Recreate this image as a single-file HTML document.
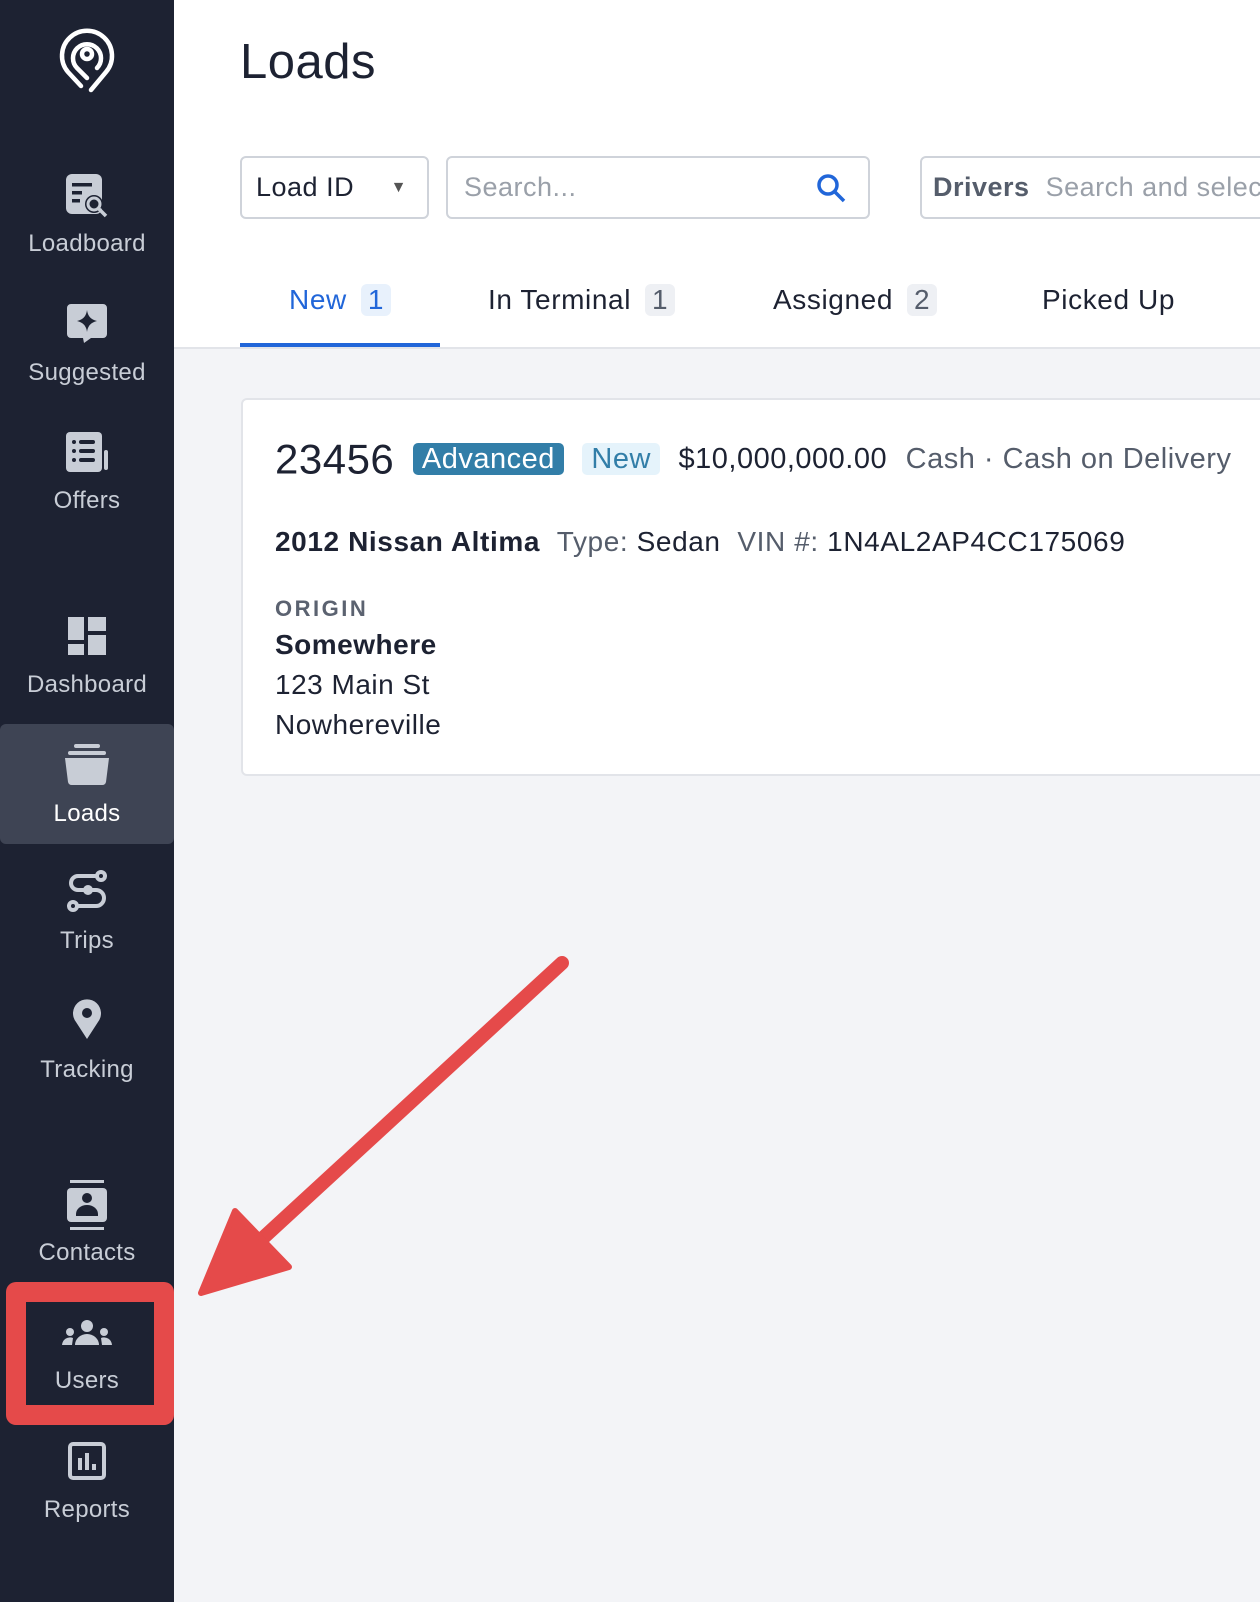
<!DOCTYPE html>
<html><head><meta charset="utf-8"><style>
*{margin:0;padding:0;box-sizing:border-box}
body{width:1260px;height:1602px;overflow:hidden;background:#f3f4f7;font-family:"Liberation Sans",sans-serif;position:relative}
.side{position:absolute;left:0;top:0;width:174px;height:1602px;background:#1d2232}
.item{position:absolute;left:0;width:174px;text-align:center;color:#c8cdd6;font-size:24px;letter-spacing:0.3px}
.item svg{display:block;margin:0 auto}
.hdr{position:absolute;left:174px;top:0;right:0;height:349px;background:#fff;border-bottom:2px solid #e2e4e9}
.abs{position:absolute}
.box{position:absolute;border:2px solid #cfd3da;border-radius:6px;background:#fff;height:63px;top:156px;font-size:27px;line-height:59px;letter-spacing:0.5px;white-space:nowrap;overflow:hidden}
.tab{position:absolute;top:284px;font-size:28px;color:#1d2232;letter-spacing:0.6px}
.badge{display:inline-block;background:#eef0f4;border-radius:6px;padding:0 7px;margin-left:14px;color:#555d6b}
.card{position:absolute;left:241px;top:398px;width:1030px;height:378px;background:#fff;border:2px solid #e2e4e9;border-radius:6px}
</style></head><body>
<div class="side">
 <div class="item" style="top:28px"><svg width="56" height="66" viewBox="0 0 56 66" fill="none" stroke="#fff" stroke-width="4.5" stroke-linecap="round"><path d="M22 58 L9 44 A25 25 0 1 1 47 44 L32 62"/><path d="M28 50 L18 40 A14 14 0 1 1 38 40"/><circle cx="28" cy="26" r="5"/></svg></div>
 <div class="item" style="top:172px"><svg width="46" height="46" viewBox="0 0 46 46"><rect x="2" y="2" width="36" height="40" rx="6" fill="#c8cdd6"/><rect x="8" y="11" width="20" height="3.5" fill="#1d2232"/><rect x="8" y="19" width="10" height="3.5" fill="#1d2232"/><rect x="8" y="27" width="8" height="3.5" fill="#1d2232"/><circle cx="30" cy="32" r="9" fill="#1d2232"/><circle cx="30" cy="32" r="6" fill="none" stroke="#c8cdd6" stroke-width="3"/><path d="M34 36 L42 44" stroke="#c8cdd6" stroke-width="3.5"/></svg><div style="margin-top:12px">Loadboard</div></div>
 <div class="item" style="top:302px"><svg width="44" height="42" viewBox="0 0 44 42"><path d="M6 2 H38 A4 4 0 0 1 42 6 V32 A4 4 0 0 1 38 36 H26 L19 41 L18 36 H6 A4 4 0 0 1 2 32 V6 A4 4 0 0 1 6 2Z" fill="#c8cdd6"/><path d="M22 8 Q23 17 32 19 Q23 21 22 30 Q21 21 12 19 Q21 17 22 8Z" fill="#1d2232"/></svg><div style="margin-top:15px">Suggested</div></div>
 <div class="item" style="top:430px"><svg width="44" height="44" viewBox="0 0 44 44"><rect x="1" y="2" width="36" height="40" rx="4" fill="#c8cdd6"/><rect x="39" y="20" width="4" height="20" rx="2" fill="#c8cdd6"/><g fill="#1d2232"><circle cx="9" cy="12" r="2"/><circle cx="9" cy="21" r="2"/><circle cx="9" cy="30" r="2"/><rect x="14" y="10" width="16" height="4" rx="2"/><rect x="14" y="19" width="16" height="4" rx="2"/><rect x="14" y="28" width="16" height="4" rx="2"/></g></svg><div style="margin-top:13px">Offers</div></div>
 <div class="item" style="top:617px"><svg width="38" height="38" viewBox="0 0 38 38" fill="#c8cdd6"><rect x="0" y="0" width="16" height="23"/><rect x="20" y="0" width="18" height="14"/><rect x="0" y="27" width="16" height="11"/><rect x="20" y="18" width="18" height="20"/></svg><div style="margin-top:16px">Dashboard</div></div>
 <div style="position:absolute;left:0;top:724px;width:174px;height:120px;background:#3e4454;border-radius:6px"></div>
 <div class="item" style="top:742px;color:#fff"><svg width="46" height="44" viewBox="0 0 46 44" fill="#c8cdd6"><rect x="10" y="2" width="26" height="4" rx="2"/><rect x="4" y="9" width="38" height="4" rx="2"/><path d="M1 16 H45 L42 40 A4 4 0 0 1 38 43 H8 A4 4 0 0 1 4 40Z"/></svg><div style="margin-top:14px">Loads</div></div>
 <div class="item" style="top:870px"><svg width="42" height="42" viewBox="0 0 42 42" fill="none" stroke="#c8cdd6" stroke-width="4"><circle cx="35" cy="6" r="4"/><circle cx="7" cy="36" r="4"/><path d="M31 6 H12 A7 7 0 0 0 12 20 H30 A8 8 0 0 1 30 36 H11"/><circle cx="22" cy="20" r="3" fill="#c8cdd6"/></svg><div style="margin-top:15px">Trips</div></div>
 <div class="item" style="top:998px"><svg width="30" height="42" viewBox="0 0 30 42"><path d="M15 41 L4 24 A14 14 0 1 1 26 24Z" fill="#c8cdd6"/><circle cx="15" cy="15" r="5" fill="#1d2232"/></svg><div style="margin-top:16px">Tracking</div></div>
 <div class="item" style="top:1180px"><svg width="42" height="50" viewBox="0 0 42 50" fill="#c8cdd6"><rect x="4" y="0" width="34" height="3"/><rect x="4" y="47" width="34" height="3"/><rect x="1" y="8" width="40" height="34" rx="4"/><circle cx="21" cy="18" r="5" fill="#1d2232"/><path d="M10 34 A11 9 0 0 1 32 34 V36 H10Z" fill="#1d2232"/></svg><div style="margin-top:9px">Contacts</div></div>
 <div style="position:absolute;left:6px;top:1282px;width:168px;height:143px;border:20px solid #e54a4a;border-radius:10px"></div>
 <div class="item" style="top:1320px"><svg width="50" height="26" viewBox="0 0 50 26" fill="#c8cdd6"><circle cx="25" cy="6" r="6"/><path d="M13 25 A12 11 0 0 1 37 25Z"/><circle cx="8" cy="12" r="4"/><path d="M0 25 A8 8 0 0 1 11 18 L10 25Z"/><circle cx="42" cy="12" r="4"/><path d="M50 25 A8 8 0 0 0 39 18 L40 25Z"/></svg><div style="margin-top:21px">Users</div></div>
 <div class="item" style="top:1442px"><svg width="38" height="38" viewBox="0 0 38 38" fill="none" stroke="#c8cdd6" stroke-width="4"><rect x="2" y="2" width="34" height="34" rx="3"/><path d="M12 16 V28 M19 11 V28 M26 22 V28"/></svg><div style="margin-top:16px">Reports</div></div>
</div>
<div class="hdr"></div>
<div class="abs" style="left:240px;top:34px;font-size:49px;color:#1d2232;letter-spacing:0.5px">Loads</div>
<div class="box" style="left:240px;width:189px;padding-left:14px;color:#1d2232">Load ID<span style="position:absolute;right:20px;top:0;font-size:16px;color:#555">▼</span></div>
<div class="box" style="left:446px;width:424px;padding-left:16px;color:#9aa0a9">Search...<svg style="position:absolute;right:22px;top:15px" width="30" height="30" viewBox="0 0 30 30" fill="none" stroke="#2166d9" stroke-width="3.5"><circle cx="12" cy="12" r="9"/><path d="M19 19 L28 28"/></svg></div>
<div class="box" style="left:920px;width:400px;padding-left:11px;color:#9aa0a9"><b style="color:#555d6b">Drivers</b>&nbsp;&nbsp;Search and select</div>
<div class="tab" style="left:289px;color:#2166d9">New<span class="badge" style="background:#e8f1fc;color:#2166d9">1</span></div>
<div class="abs" style="left:240px;top:343px;width:200px;height:4px;background:#2166d9"></div>
<div class="tab" style="left:488px">In Terminal<span class="badge">1</span></div>
<div class="tab" style="left:773px">Assigned<span class="badge">2</span></div>
<div class="tab" style="left:1042px">Picked Up</div>
<div class="card">
 <div class="abs" style="left:32px;top:38px;white-space:nowrap;color:#1d2232;font-size:29px;line-height:40px;letter-spacing:0.5px">
  <span style="font-size:42px;vertical-align:middle">23456</span>
  <span style="background:#327ea8;color:#fff;padding:0 9px;border-radius:5px;margin-left:10px;vertical-align:middle">Advanced</span>
  <span style="background:#e5f3fb;color:#327ea8;padding:0 9px;border-radius:5px;margin-left:10px;vertical-align:middle">New</span>
  <span style="margin-left:10px;vertical-align:middle">$10,000,000.00</span>
  <span style="margin-left:10px;vertical-align:middle;color:#555d6b">Cash · Cash on Delivery</span>
 </div>
 <div class="abs" style="left:32px;top:126px;font-size:28px;white-space:nowrap;color:#1d2232;letter-spacing:0.6px"><b>2012 Nissan Altima</b>&nbsp;&nbsp;<span style="color:#555d6b">Type:</span> Sedan&nbsp;&nbsp;<span style="color:#555d6b">VIN #:</span> 1N4AL2AP4CC175069</div>
 <div class="abs" style="left:32px;top:196px;font-size:22px;font-weight:bold;letter-spacing:2.5px;color:#5b6270">ORIGIN</div>
 <div class="abs" style="left:32px;top:225px;font-size:28px;line-height:40px;color:#1d2232;letter-spacing:0.5px"><b>Somewhere</b><br>123 Main St<br>Nowhereville</div>
</div>
<svg class="abs" style="left:0;top:0" width="1260" height="1602"><path d="M562 963 L250 1250" stroke="#e54a4a" stroke-width="14" stroke-linecap="round"/><path d="M201 1293 L235 1211 L289 1267Z" fill="#e54a4a" stroke="#e54a4a" stroke-width="6" stroke-linejoin="round"/></svg>
</body></html>
